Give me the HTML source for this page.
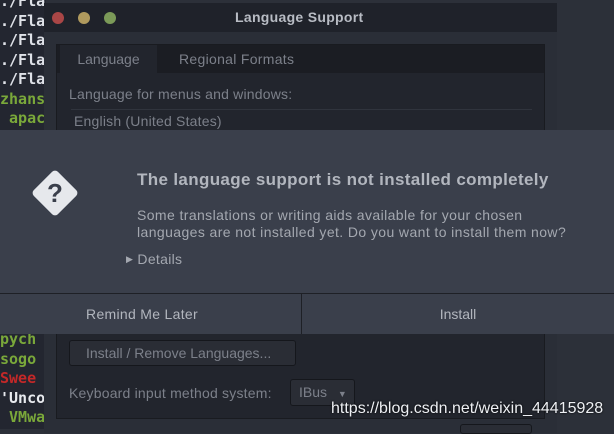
<!DOCTYPE html>
<html><head><style>
*{margin:0;padding:0;box-sizing:border-box}
body{width:614px;height:429px;overflow:hidden;background:#2c3039;font-family:"Liberation Sans","DejaVu Sans",sans-serif;position:relative}
.term{position:absolute;left:0;top:0;width:46px;height:429px;background:#232630;font-family:"DejaVu Sans Mono","Liberation Mono",monospace;font-weight:bold;font-size:15px;line-height:19.5px;color:#dfe2e8;white-space:pre;overflow:hidden}
.win{position:absolute;left:44px;top:3px;width:513px;height:430px;background:#2a2e37}
.title{height:29px;background:#1f222a;color:#b8bcc4;font-weight:bold;font-size:14px;line-height:28px;position:relative;letter-spacing:.3px}
.dot{position:absolute;top:9px;width:12px;height:12px;border-radius:50%}
.nb{position:absolute;left:12px;top:41px;width:489px;height:375px;background:#22252d;border:1px solid #191b20}
.tabs{height:28px;background:#1b1d23;font-size:14px;color:#7c808a}
.tab{position:absolute;top:0;height:28px;line-height:28px}
.t{position:absolute;font-size:14px;color:#7c808a;letter-spacing:.2px}
.dlg{position:absolute;left:0;top:130px;width:614px;height:204px;background:#3a3f4b}
.btn{position:absolute;border:1px solid #15171c;border-radius:3px;background:#2a2d35;color:#7c808a;font-size:14px}
</style></head><body>
<div class="term"><span style="position:absolute;top:-8px">./Fla
./Fla
./Fla
./Fla
./Fla
<span style="color:#7aa83a">zhans
 apac</span></span><span style="position:absolute;top:330px;color:#7aa83a">pych
sogo
<span style="color:#c42828">Swee</span>
<span style="color:#e8eaee">'Unco</span>
 VMwa</span></div>
<div class="win">
<div class="title"><span class="dot" style="left:8px;background:#a94646"></span><span class="dot" style="left:34px;background:#b09a5e"></span><span class="dot" style="left:60px;background:#7b9a58"></span><span style="position:absolute;left:191px">Language Support</span></div>
<div class="nb">
<div class="tabs"><div class="tab" style="left:3px;width:97px;background:#22252d;text-align:center">Language</div><div class="tab" style="left:122px;letter-spacing:.3px">Regional Formats</div></div>
<div class="t" style="left:12px;top:41px">Language for menus and windows:</div>
<div style="position:absolute;left:14px;top:64px;width:461px;height:1px;background:#30343d"></div>
<div class="t" style="left:17px;top:68px">English (United States)</div>
<div class="btn" style="left:12px;top:295px;width:227px;height:26px;line-height:24px;padding-left:16px">Install / Remove Languages...</div>
<div class="t" style="left:12px;top:340px">Keyboard input method system:</div>
<div class="btn" style="left:233px;top:334px;width:65px;height:27px;line-height:25px;padding-left:8px">IBus <span style="font-size:9px;margin-left:7px">▼</span></div>
</div>
</div>
<div style="position:absolute;left:460px;top:424px;width:72px;height:10px;border:1px solid #15171c;border-radius:3px;background:#2a2d35"></div>
<div class="dlg">
<svg style="position:absolute;left:30px;top:38px" width="50" height="50" viewBox="0 0 50 50"><rect x="8" y="8" width="34" height="34" rx="4" transform="rotate(45 25 25)" fill="#e6e8ec"/><text x="25" y="34" text-anchor="middle" font-family="Liberation Sans" font-weight="bold" font-size="26" fill="#3a3f4b">?</text></svg>
<div style="position:absolute;left:137px;top:40px;font-size:17px;font-weight:bold;color:#b2b6be;letter-spacing:.35px">The language support is not installed completely</div>
<div style="position:absolute;left:137px;top:77px;font-size:14px;line-height:17px;color:#a4a8b0;letter-spacing:.4px">Some translations or writing aids available for your chosen<br>languages are not installed yet. Do you want to install them now?</div>
<div style="position:absolute;left:126px;top:121px;font-size:14px;color:#a4a8b0;letter-spacing:.3px"><span style="font-size:9px;vertical-align:2px">▶</span> Details</div>
<div style="position:absolute;left:0;top:163px;width:614px;height:1px;background:#1e2026"></div>
<div style="position:absolute;left:301px;top:164px;width:1px;height:40px;background:#1e2026"></div>
<div style="position:absolute;left:0;top:164px;width:284px;height:40px;line-height:40px;text-align:center;font-size:14px;color:#b2b6be;letter-spacing:.3px">Remind Me Later</div>
<div style="position:absolute;left:302px;top:164px;width:312px;height:40px;line-height:40px;text-align:center;font-size:14px;color:#b2b6be">Install</div>
</div>
<div style="position:absolute;left:331px;top:400px;font-size:16px;color:#eef0f4;text-shadow:0 0 2px #000">https://blog.csdn.net/weixin_44415928</div>
</body></html>
